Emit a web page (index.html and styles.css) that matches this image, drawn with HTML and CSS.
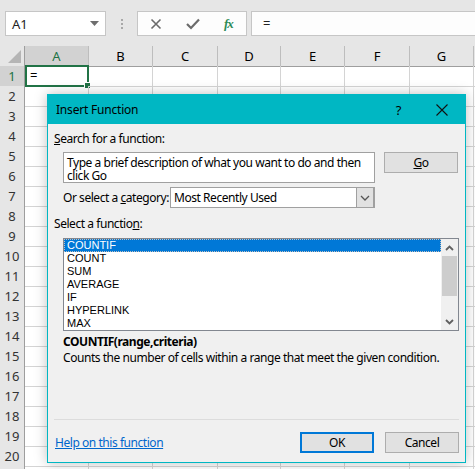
FILE: index.html
```html
<!DOCTYPE html>
<html>
<head>
  <title>Insert Function</title>
  <link rel="stylesheet" href="styles.css">
</head>
<body>
  <div class="app">
    <div class="toolbar">
      <div class="name-box">
        <span>A1</span>
        <svg class="nb-arrow" width="9" height="5" viewBox="0 0 9 5"><path d="M0 0h9L4.5 5z" fill="#6e6e6e"/></svg>
      </div>
      <div class="grip"><i></i><i></i><i></i></div>
      <div class="fx-box">
        <svg width="12" height="12" viewBox="0 0 12 12"><path d="M1.5 1.5l9 9M10.5 1.5l-9 9" stroke="#6b6b6b" stroke-width="1.6"/></svg>
        <svg width="14" height="12" viewBox="0 0 14 12"><path d="M1 6l4 4L13 1.5" stroke="#6b6b6b" stroke-width="2.2" fill="none"/></svg>
        <span class="fx">fx</span>
      </div>
      <div class="formula">=</div>
    </div>

    <div class="sheet" id="sheet">
      <div class="row head">
        <div class="corner"><svg width="13" height="13" viewBox="0 0 13 13"><path d="M13 0v13H0z" fill="#b5b5b5"/></svg></div>
        <div class="ch active">A</div>
        <div class="ch">B</div>
        <div class="ch">C</div>
        <div class="ch">D</div>
        <div class="ch">E</div>
        <div class="ch">F</div>
        <div class="ch">G</div>
        <div class="ch"></div>
      </div>
    </div>

    <div class="dialog">
      <div class="title-bar">
        <span class="title">Insert Function</span>
        <span class="help">?</span>
        <svg class="close" width="12" height="12" viewBox="0 0 12 12"><path d="M0.5 0.5l11 11M11.5 0.5l-11 11" stroke="#111" stroke-width="1.1"/></svg>
      </div>
      <div class="dlg-body">
        <div class="label"><u>S</u>earch for a function:</div>
        <div class="search-row">
          <div class="search-input">Type a brief description of what you want to do and then click Go</div>
          <button class="btn"><u>G</u>o</button>
        </div>
        <div class="cat-row">
          <span class="cat-label">Or select a <u>c</u>ategory:</span>
          <div class="select">
            <span>Most Recently Used</span>
            <div class="select-btn">
              <svg width="10" height="6" viewBox="0 0 10 6"><path d="M1 1l4 4 4-4" stroke="#555" stroke-width="1.3" fill="none"/></svg>
            </div>
          </div>
        </div>
        <div class="label fn-label">Select a functio<u>n</u>:</div>
        <div class="listbox">
          <ul class="items">
            <li class="selected">COUNTIF</li>
            <li>COUNT</li>
            <li>SUM</li>
            <li>AVERAGE</li>
            <li>IF</li>
            <li>HYPERLINK</li>
            <li>MAX</li>
          </ul>
          <div class="scrollbar">
            <svg width="9" height="6" viewBox="0 0 9 6"><path d="M1 5l3.5-3.5L8 5" stroke="#606060" stroke-width="1.8" fill="none"/></svg>
            <div class="thumb"></div>
            <div class="track"></div>
            <svg width="9" height="6" viewBox="0 0 9 6"><path d="M1 1l3.5 3.5L8 1" stroke="#606060" stroke-width="1.8" fill="none"/></svg>
          </div>
        </div>
        <div class="syntax">COUNTIF(range,criteria)</div>
        <div class="desc">Counts the number of cells within a range that meet the given condition.</div>
        <div class="footer">
          <a href="#" class="help-link">Help on this function</a>
          <button class="btn default">OK</button>
          <button class="btn">Cancel</button>
        </div>
      </div>
    </div>
  </div>

  <script>
    // build the worksheet rows
    const sheet = document.getElementById('sheet');
    for (let r = 1; r <= 21; r++) {
      const row = document.createElement('div');
      row.className = 'row';
      let html = '<div class="rh' + (r === 1 ? ' active' : '') + '">' + (r <= 20 ? r : '') + '</div>';
      for (let c = 0; c < 8; c++) {
        if (r === 1 && c === 0) {
          html += '<div class="cell sel">=<span class="handle"></span></div>';
        } else {
          html += '<div class="cell"></div>';
        }
      }
      row.innerHTML = html;
      sheet.appendChild(row);
    }
  </script>
</body>
</html>
```

FILE: styles.css
```css
body {
  margin: 0;
  font-family: 'Noto Sans', 'Open Sans', sans-serif;
  font-size: 12px;
  color: #000;
  background-color: #fff;
}

.app {
  position: relative;
  width: 475px;
  height: 469px;
  overflow: hidden;
}

/* formula bar */
.toolbar {
  height: 46px;
  background-color: #e6e6e6;
  display: flex;
  align-items: flex-start;
  padding-top: 11px;
  box-sizing: border-box;
}

.name-box {
  margin-left: 5px;
  width: 101px;
  height: 25px;
  box-sizing: border-box;
  background-color: #fff;
  border: 1px solid #c6c6c6;
  display: flex;
  align-items: center;
  justify-content: space-between;
  padding: 0 6px 0 6px;
  font-size: 13px;
  color: #222;
}

.grip {
  width: 31px;
  height: 25px;
  display: flex;
  flex-direction: column;
  align-items: center;
  justify-content: center;
  gap: 2px;
}

.grip i {
  display: block;
  width: 2px;
  height: 2px;
  background-color: #a8a8a8;
}

.fx-box {
  width: 110px;
  height: 25px;
  box-sizing: border-box;
  background-color: #fdfdfd;
  border: 1px solid #c6c6c6;
  display: flex;
  align-items: center;
  padding-left: 12px;
  gap: 24px;
}

.fx {
  font-family: 'Liberation Serif', serif;
  font-style: italic;
  font-weight: bold;
  font-size: 13px;
  color: #2e8b57;
  letter-spacing: -1px;
}

.formula {
  margin-left: 4px;
  flex: 1;
  height: 25px;
  box-sizing: border-box;
  background-color: #fdfdfd;
  border: 1px solid #c6c6c6;
  border-right: none;
  padding-left: 11px;
  line-height: 22px;
  font-size: 13px;
  color: #222;
}

/* worksheet */
.row {
  display: grid;
  grid-template-columns: 25px 64px 64px 65px 63px 64px 65px 64px 40px;
  height: 20px;
}

.head {
  background-color: #e6e6e6;
}

.corner {
  display: flex;
  align-items: flex-end;
  justify-content: flex-end;
  padding: 0 3px 3px 0;
  border-bottom: 1px solid #9e9e9e;
  border-right: 1px solid #9e9e9e;
}

.ch {
  border-right: 1px solid #bdbdbd;
  border-bottom: 1px solid #9e9e9e;
  text-align: center;
  line-height: 20px;
  font-size: 13px;
}

.ch.active {
  background-color: #d2d2d2;
  color: #217346;
}

.rh {
  background-color: #e6e6e6;
  border-right: 1px solid #9e9e9e;
  border-bottom: 1px solid #c8c8c8;
  text-align: center;
  line-height: 20px;
  font-size: 13px;
  color: #333;
}

.rh.active {
  background-color: #d2d2d2;
  color: #217346;
}

.cell {
  border-right: 1px solid #d4d4d4;
  border-bottom: 1px solid #d4d4d4;
  position: relative;
}

.cell.sel {
  border: 2px solid #217346;
  margin: -1px 0 0 0;
  padding-left: 3px;
  line-height: 17px;
  font-size: 13px;
}

.handle {
  position: absolute;
  right: -4px;
  bottom: -4px;
  width: 5px;
  height: 5px;
  background-color: #217346;
  border: 1px solid #fff;
}

/* dialog */
.dialog {
  position: absolute;
  left: 47px;
  top: 94px;
  width: 419px;
  height: 369px;
  box-sizing: border-box;
  border: 1px solid #00b7c3;
  background-color: #f0f0f0;
  box-shadow: 0 0 12px rgba(0, 0, 0, 0.25);
  display: flex;
  flex-direction: column;
  letter-spacing: -0.45px;
}

.title-bar {
  height: 29px;
  background-color: #00b7c3;
  display: flex;
  align-items: center;
  padding-left: 8px;
}

.title {
  flex: 1;
  font-size: 12px;
  letter-spacing: -0.2px;
}

.help {
  font-size: 13px;
  margin-right: 35px;
}

.close {
  margin-right: 17px;
}

.dlg-body {
  flex: 1;
  display: flex;
  flex-direction: column;
  padding: 7px 6px 9px 6px;
}

.label {
  line-height: 16px;
}

.search-row {
  display: flex;
  align-items: flex-start;
  margin: 5px 0 0 9px;
}

.search-input {
  width: 312px;
  height: 31px;
  box-sizing: border-box;
  background-color: #fff;
  border: 1px solid #a0a0a0;
  padding: 3px 3px 0 3px;
  line-height: 13px;
}

.btn {
  width: 74px;
  height: 21px;
  margin-left: 9px;
  background-color: #e1e1e1;
  border: 1px solid #adadad;
  font-family: inherit;
  font-size: 12px;
  letter-spacing: inherit;
  color: #000;
  padding: 0;
}

.btn.default {
  border: 2px solid #0078d7;
}

.cat-row {
  display: flex;
  align-items: center;
  margin: 4px 0 0 9px;
}

.cat-label {
  width: 107px;
  flex-shrink: 0;
  white-space: nowrap;
}

.select {
  width: 205px;
  height: 21px;
  box-sizing: border-box;
  background-color: #fff;
  border: 1px solid #a0a0a0;
  border-right: 2px solid #a0a0a0;
  display: flex;
  align-items: center;
  padding-left: 3px;
}

.select span {
  flex: 1;
}

.select-btn {
  width: 16px;
  height: 100%;
  background-color: #e1e1e1;
  border-left: 1px solid #a0a0a0;
  display: flex;
  align-items: center;
  justify-content: center;
}

.fn-label {
  margin-top: 8px;
}

.listbox {
  margin: 6px 0 0 9px;
  width: 396px;
  height: 93px;
  box-sizing: border-box;
  border: 1px solid #828790;
  background-color: #fff;
  display: flex;
}

.items {
  flex: 1;
  list-style: none;
  margin: 0;
  padding: 0;
  font-family: 'Liberation Sans', Arial, sans-serif;
  font-size: 11px;
  letter-spacing: 0;
}

.items li {
  height: 13px;
  line-height: 13px;
  padding-left: 3px;
}

.items li.selected {
  background-color: #0078d7;
  color: #fff;
  outline: 1px dotted #c0c0c0;
  outline-offset: -1px;
}

.scrollbar {
  width: 17px;
  background-color: #f0f0f0;
  display: flex;
  flex-direction: column;
  align-items: center;
  padding: 6px 0 5px 0;
  box-sizing: border-box;
}

.thumb {
  margin-top: 5px;
  width: 15px;
  height: 40px;
  background-color: #cdcdcd;
}

.track {
  flex: 1;
}

.syntax {
  margin: 3px 0 0 9px;
  font-weight: bold;
  line-height: 16px;
}

.desc {
  margin-left: 9px;
  line-height: 16px;
  flex: 1;
}

.footer {
  border-top: 1px solid #dcdcdc;
  padding-top: 12px;
  display: flex;
  align-items: center;
}

.help-link {
  flex: 1;
  color: #0066cc;
  text-decoration: underline;
  margin-left: 1px;
}

.footer .btn.default {
  margin-left: 0;
}

.footer .btn {
  margin-left: 11px;
}
```
